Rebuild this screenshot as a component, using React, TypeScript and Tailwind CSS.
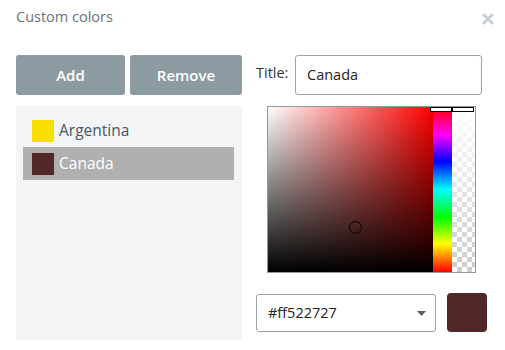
import React from "react";

const font = { fontFamily: '"Open Sans", "Noto Sans", sans-serif' };

export default function App() {
  return (
    <div className="relative w-[505px] h-[350px] bg-white overflow-hidden" style={font}>
      <div className="flex items-start justify-between pl-4 pr-[11px] pt-[6px] h-[55px]">
        <span className="text-[14.5px] text-[#6b7280] leading-[22px]">Custom colors</span>
        <svg width="12" height="12" viewBox="0 0 12 12" className="mt-[7px]">
          <path d="M2 2 L10 10 M10 2 L2 10" stroke="#c8ced3" strokeWidth="3" strokeLinecap="round" />
        </svg>
      </div>
      <div className="flex pl-4 gap-[14px]">
        <div className="flex flex-col w-[226px] gap-[11px]">
          <div className="flex gap-[5px] h-[40px]">
            <button className="w-[110px] h-[40px] rounded-[3px] bg-[#8c9aa1] text-white text-[15px] font-semibold">Add</button>
            <button className="w-[113px] h-[40px] rounded-[3px] bg-[#8c9aa1] text-white text-[15px] font-semibold">Remove</button>
          </div>
          <div className="h-[234px] bg-[#f3f4f6] pt-[8px] pl-[7px] pr-[8px]">
            <div className="flex items-center h-[33px] pl-[9px] gap-[5px]">
              <div className="w-[22px] h-[22px] bg-[#f8df00]" />
              <span className="text-[15.5px] text-[#4b5563]">Argentina</span>
            </div>
            <div className="flex items-center h-[33px] pl-[9px] gap-[5px] bg-[#b0b0b0]">
              <div className="w-[22px] h-[22px] bg-[#522727]" />
              <span className="text-[15.5px] text-white">Canada</span>
            </div>
          </div>
        </div>
        <div className="flex flex-col w-[231px]">
          <div className="flex items-center h-[40px]">
            <span className="text-[14.5px] text-[#333] w-[39px] -mt-[4px]">Title:</span>
            <div className="flex items-center w-[187px] h-[40px] border border-[#9aa3a8] rounded-[3px] pl-[11px] text-[14.5px] text-[#222]">
              Canada
            </div>
          </div>
          <div className="mt-[11px] ml-[11px] w-[209px] h-[167px] border border-[#8f989d] flex">
            <div className="relative w-[165px] h-full" style={{ background: "#ff0000" }}>
              <div className="absolute inset-0 bg-gradient-to-r from-white to-transparent" />
              <div className="absolute inset-0 bg-gradient-to-b from-transparent to-black" />
              <div className="absolute left-[81px] top-[114px] w-[13px] h-[13px] rounded-full border border-black" />
            </div>
            <div
              className="relative w-[19px] h-full"
              style={{
                background:
                  "linear-gradient(to bottom, #ff0000 0%, #ff00ff 17%, #0000ff 33%, #00ffff 50%, #00ff00 67%, #ffff00 83%, #ff0000 100%)",
              }}
            >
              <div className="absolute -left-[3px] top-0 w-[22px] h-[5px] bg-white border border-black" />
            </div>
            <div
              className="relative flex-1 h-full"
              style={{
                backgroundColor: "#fff",
                backgroundImage:
                  "linear-gradient(45deg, #ccc 25%, transparent 25%, transparent 75%, #ccc 75%), linear-gradient(45deg, #ccc 25%, transparent 25%, transparent 75%, #ccc 75%)",
                backgroundSize: "10px 10px",
                backgroundPosition: "0 0, 5px 5px",
              }}
            >
              <div className="absolute inset-0 bg-gradient-to-b from-white to-transparent" />
              <div className="absolute left-0 top-0 w-[22px] h-[5px] bg-white border border-black" />
            </div>
          </div>
          <div className="flex items-center mt-[20px] gap-[11px]">
            <div className="relative flex items-center w-[180px] h-[38px] border border-[#9aa3a8] rounded-[3px] pl-[11px] text-[14.5px] text-[#222]">
              #ff522727
              <svg className="absolute right-[9px] top-[16px]" width="9" height="5" viewBox="0 0 9 5">
                <path d="M0 0 L9 0 L4.5 5 Z" fill="#5a6268" />
              </svg>
            </div>
            <div className="w-[40px] h-[39px] rounded-[4px] bg-[#522727]" />
          </div>
        </div>
      </div>
    </div>
  );
}
